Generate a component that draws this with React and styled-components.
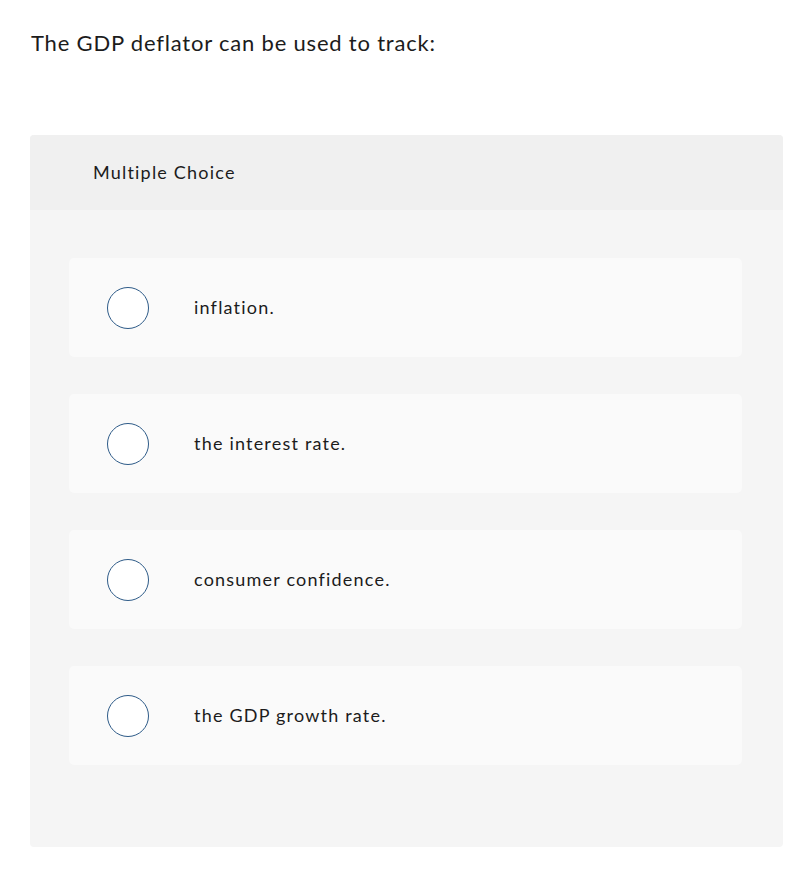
import React from "react";
import styled, { createGlobalStyle } from "styled-components";

const Global = createGlobalStyle`
  html, body { margin: 0; padding: 0; background: #fff; }
  body { font-family: Lato, "Open Sans", sans-serif; color: #1c1c1c; }
`;

const Page = styled.div`
  padding: 28px 16px 40px 30px;
  width: 799px;
  box-sizing: border-box;
`;

const Question = styled.div`
  font-size: 22px;
  line-height: 30px;
  letter-spacing: 0.8px;
  margin: 0 0 77px 1px;
  color: #1c1c1c;
`;

const Panel = styled.div`
  width: 753px;
  background: #f5f5f5;
  border-radius: 4px;
  overflow: hidden;
`;

const Header = styled.div`
  height: 75px;
  box-sizing: border-box;
  padding: 0 0 2px 63px;
  background: #f0f0f0;
  display: flex;
  align-items: center;
  font-size: 18px;
  letter-spacing: 1.2px;
  font-variant-ligatures: none;
  color: #1c1c1c;
`;

const Body = styled.div`
  display: flex;
  flex-direction: column;
  gap: 37px;
  padding: 48px 41px 82px 39px;
`;

const Option = styled.label`
  height: 99px;
  background: #fafafa;
  border-radius: 5px;
  display: flex;
  align-items: center;
  padding-left: 38px;
  cursor: pointer;
`;

const Radio = styled.span`
  width: 40px;
  height: 40px;
  border: 1.3px solid #2e5b88;
  border-radius: 50%;
  background: #fff;
  flex-shrink: 0;
`;

const OptionText = styled.span`
  margin: 0 0 2px 45px;
  font-size: 18px;
  letter-spacing: 1.2px;
  font-variant-ligatures: none;
  color: #1c1c1c;
`;

const options = [
  "inflation.",
  "the interest rate.",
  "consumer confidence.",
  "the GDP growth rate.",
];

export default function App() {
  return (
    <>
      <Global />
      <Page>
        <Question>The GDP deflator can be used to track:</Question>
        <Panel>
          <Header>Multiple Choice</Header>
          <Body>
            {options.map((o) => (
              <Option key={o}>
                <Radio />
                <OptionText>{o}</OptionText>
              </Option>
            ))}
          </Body>
        </Panel>
      </Page>
    </>
  );
}
